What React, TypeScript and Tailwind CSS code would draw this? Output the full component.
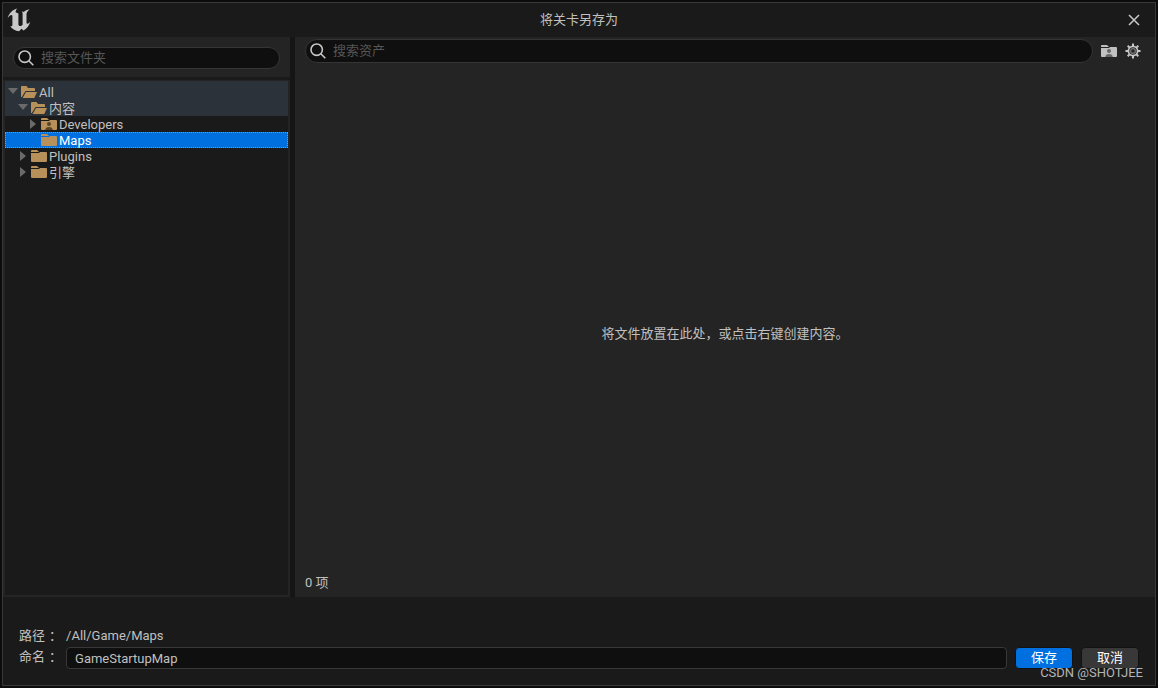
import type { ReactNode } from 'react';

const SANS = "font-['Roboto','Noto_Sans_CJK_SC',sans-serif]";

type IconKind = 'open' | 'closed' | 'user';

const folders: {
  name: string;
  indent: string;
  arrow: 'down' | 'right' | 'none';
  icon: IconKind;
  state: 'parent' | 'selected' | 'normal';
}[] = [
  { name: 'All', indent: 'pl-[2px]', arrow: 'down', icon: 'open', state: 'parent' },
  { name: '内容', indent: 'pl-[12px]', arrow: 'down', icon: 'open', state: 'parent' },
  { name: 'Developers', indent: 'pl-[22px]', arrow: 'right', icon: 'user', state: 'normal' },
  { name: 'Maps', indent: 'pl-[21px]', arrow: 'none', icon: 'closed', state: 'selected' },
  { name: 'Plugins', indent: 'pl-[12px]', arrow: 'right', icon: 'closed', state: 'normal' },
  { name: '引擎', indent: 'pl-[12px]', arrow: 'right', icon: 'closed', state: 'normal' },
];

const rowStyles = {
  parent: 'bg-[#2b323a]',
  selected: 'border border-dotted border-[#e08a10] bg-[#0070e0] text-white',
  normal: '',
};

function UnrealLogo() {
  return (
    <svg viewBox="0 0 24 24" className="h-6 w-6 shrink-0" fill="#c8c8c8" aria-hidden="true">
      <path d="M10.3 .5C6 1.500 2.200 4.800 .7 9.900c1.500-2 3-3.100 3.900-2.800.6.200.8.7.8 1.500v8.100c0 1.200-.4 1.600-1.100 1.600-.5 0-.9-.1-1.200-.3 1.800 2.800 5 4.900 9 5.200l2.400-2.400 2.100 1.700c3.500-1.700 5.700-5.300 6.700-8.700-1.100 1.200-2.100 1.900-2.900 1.900-.6 0-.9-.4-.9-1.200V6.500c0-2 1.300-3.900 3.200-5.300-2.500.3-4.700 1.500-5.900 2.800-.4-.4-1.200-.6-2.200-.4.7.5 1 1.100 1 2.100v11.100c-.7.8-1.500 1.300-2.300 1.300-1.300 0-1.900-.8-1.900-2.100V5.500L8.600 4.300c-.1-1.500.7-2.800 1.700-3.800z" />
    </svg>
  );
}

function SearchIcon() {
  return (
    <svg viewBox="0 0 16 16" className="h-4 w-4 shrink-0" fill="none" stroke="#c8c8c8" strokeWidth="1.600" aria-hidden="true">
      <circle cx="6.700" cy="6.700" r="5.700" />
      <path d="M10.800 10.800L15.300 15.300" />
    </svg>
  );
}

function FolderIcon({ kind, color = '#b8905a', cut = '#5a4326' }: { kind: IconKind; color?: string; cut?: string }) {
  if (kind === 'open') {
    return (
      <svg viewBox="0 0 16 16" className="h-4 w-4 shrink-0" fill={color} aria-hidden="true">
        <path d="M0 13V3q0-1 1-1h4.500l1.500 2h6q1 0 1 1v2H4.500L.8 13z" />
        <path d="M5 8h11l-2.700 6H1.600z" />
      </svg>
    );
  }
  return (
    <svg viewBox="0 0 16 16" className="h-4 w-4 shrink-0" fill={color} aria-hidden="true">
      <path d="M0 4V3q0-1 1-1h5l2 2z" />
      <path d="M0 5h8l1-1h6q1 0 1 1v8q0 1-1 1H1q-1 0-1-1z" />
      {kind === 'user' && (
        <g fill={cut}>
          <circle cx="8" cy="8" r="2" />
          <path d="M4.200 14q.3-3 3.800-3t3.800 3z" />
        </g>
      )}
    </svg>
  );
}

function GearIcon() {
  return (
    <svg viewBox="0 0 16 16" className="h-4 w-4" stroke="#c8c8c8" fill="none" aria-hidden="true">
      <circle cx="8" cy="8" r="4.600" strokeWidth="1.700" />
      <circle cx="8" cy="8" r="2.400" strokeWidth="1.200" stroke="#7a7a7a" />
      <path
        strokeWidth="2"
        d="M8 .5v2.700M8 12.800v2.700M.5 8h2.700M12.800 8h2.700M2.700 2.700l1.900 1.900M11.400 11.400l1.900 1.900M13.300 2.700l-1.900 1.900M4.600 11.400l-1.900 1.900"
      />
    </svg>
  );
}

function Arrow({ dir }: { dir: 'down' | 'right' | 'none' }) {
  return (
    <svg viewBox="0 0 12 16" className="h-4 w-3 shrink-0" fill="#6a6a6a" aria-hidden="true">
      {dir === 'down' && <path d="M1 4h10L6 10z" />}
      {dir === 'right' && <path d="M3 3v10l6-5z" />}
    </svg>
  );
}

function SearchBox({ label, className }: { label: string; className: string }) {
  return (
    <label className={`flex items-center rounded-full border border-[#353535] bg-[#0f0f0f] pl-1 pr-3 ${className}`}>
      <SearchIcon />
      <input
        type="text"
        aria-label={label}
        placeholder={label}
        className="ml-[7px] min-w-0 flex-1 bg-transparent leading-4 text-[#c0c0c0] outline-none placeholder:text-[#565656]"
      />
    </label>
  );
}

function FooterButton({ className, children }: { className: string; children: ReactNode }) {
  return (
    <button type="button" className={`h-[22px] w-[58px] rounded-[4px] border border-[#121212] leading-5 text-white ${className}`}>
      {children}
    </button>
  );
}

export default function App() {
  return (
    <div className={`flex h-screen flex-col bg-[#0c0c0c] p-[2px] text-[13px] leading-4 text-[#c0c0c0] ${SANS}`}>
      <div className="relative flex min-h-0 flex-1 flex-col border border-[#383838] bg-[#1a1a1a]">
        <header className="grid h-[34px] shrink-0 grid-cols-[1fr_auto_1fr] items-center">
          <div className="pl-1">
            <UnrealLogo />
          </div>
          <h1>将关卡另存为</h1>
          <div className="flex justify-end pr-[11px]">
            <button type="button" aria-label="关闭" className="p-1">
              <svg viewBox="0 0 12 12" className="h-3 w-3" stroke="#c8c8c8" strokeWidth="1.500">
                <path d="M1 1l10 10M11 1L1 11" />
              </svg>
            </button>
          </div>
        </header>

        <main className="flex min-h-0 flex-1">
          <aside className="flex w-[287px] shrink-0 flex-col bg-[#242424]">
            <div className="px-[10px] pb-2 pt-[10px]">
              <SearchBox label="搜索文件夹" className="h-[22px]" />
            </div>
            <div className="h-[3px] bg-[#1a1a1a]" />
            <div className="flex-1 border-2 border-t border-[#242424] bg-[#1a1a1a]">
              <div className="h-[3px] bg-[#2b323a]" />
              <ul role="tree" aria-label="文件夹">
                {folders.map((folder) => (
                  <li
                    key={folder.name}
                    role="treeitem"
                    aria-selected={folder.state === 'selected'}
                    className={`flex h-4 items-center ${folder.indent} ${rowStyles[folder.state]}`}
                  >
                    <Arrow dir={folder.arrow} />
                    <span className="ml-[2px] flex items-center gap-[2px]">
                      <FolderIcon kind={folder.icon} />
                      <span className="pt-[2px] leading-4">{folder.name}</span>
                    </span>
                  </li>
                ))}
              </ul>
            </div>
          </aside>

          <div className="w-[5px] shrink-0 bg-[#151515]" />

          <section className="flex min-w-0 flex-1 flex-col bg-[#242424]">
            <div className="flex items-center pl-[10px] pr-[14px] pt-[2px]">
              <SearchBox label="搜索资产" className="h-6 flex-1" />
              <button type="button" aria-label="文件夹" className="ml-2">
                <FolderIcon kind="user" color="#c0c0c0" cut="#666666" />
              </button>
              <button type="button" aria-label="设置" className="ml-2">
                <GearIcon />
              </button>
            </div>
            <div className="flex flex-1 items-center justify-center pt-[30px]">
              <p>将文件放置在此处，或点击右键创建内容。</p>
            </div>
            <p className="px-[10px] pb-[6px]">0 项</p>
          </section>
        </main>

        <footer className="grid shrink-0 grid-cols-[auto_1fr] items-center gap-x-1 px-4 pb-4 pt-[31px]">
          <span>
            路径<span className="ml-1">：</span>
          </span>
          <span>/All/Game/Maps</span>
          <label htmlFor="level-name">
            命名<span className="ml-1">：</span>
          </label>
          <div className="mt-[3px] flex items-center gap-2">
            <input
              id="level-name"
              type="text"
              defaultValue="GameStartupMap"
              className="h-[22px] min-w-0 flex-1 rounded-[4px] border border-[#383838] bg-[#0f0f0f] px-2 outline-none"
            />
            <FooterButton className="bg-[#0070e0]">保存</FooterButton>
            <FooterButton className="bg-[#383838]">取消</FooterButton>
          </div>
        </footer>

        <span className="pointer-events-none absolute bottom-1 right-3 text-[#b4b4b4]">CSDN @SHOTJEE</span>
      </div>
    </div>
  );
}
